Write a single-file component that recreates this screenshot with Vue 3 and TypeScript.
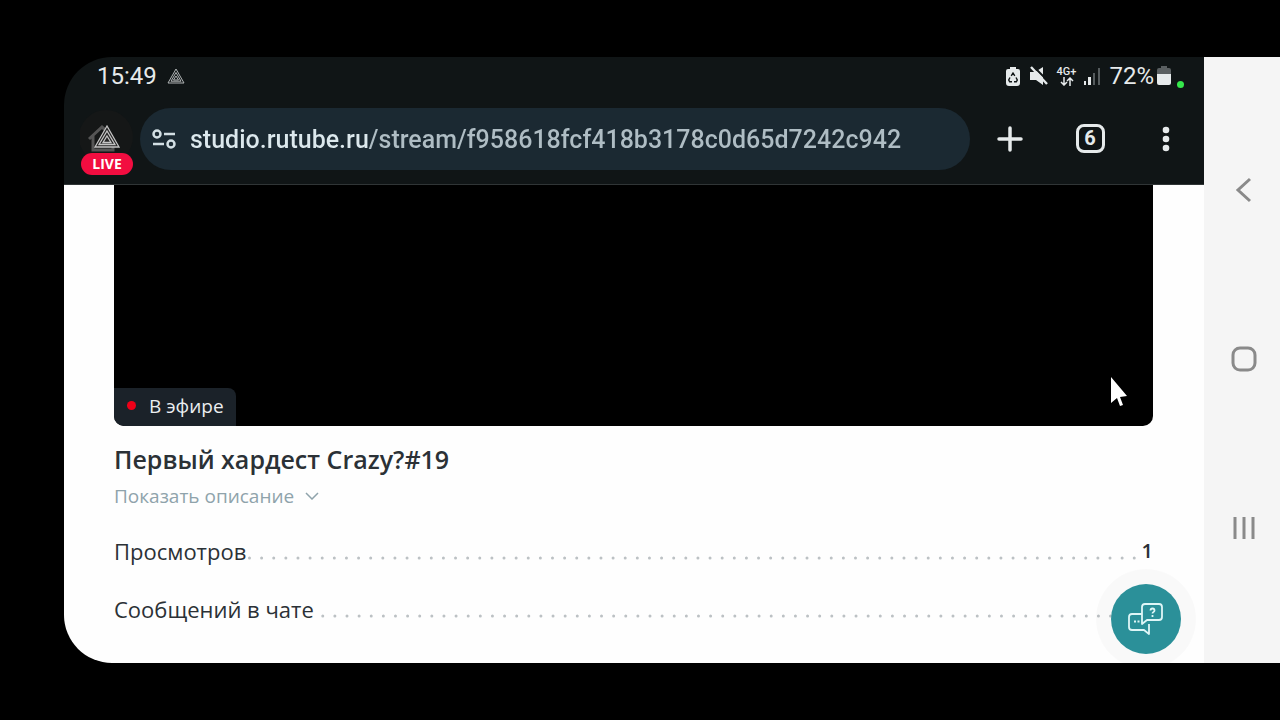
<script setup lang="ts">
import { ref } from 'vue'

interface Stat {
  label: string
  value: string
}

const address = ref('studio.rutube.ru/stream/f958618fcf418b3178c0d65d7242c942')
const tabCount = ref(6)
const expanded = ref(false)
const stats: Stat[] = [
  { label: 'Просмотров', value: '1' },
  { label: 'Сообщений в чате', value: '0' },
]
</script>

<template>
  <div class="stage">
    <div class="device">
      <div class="screen">
        <header class="chrome">
          <div class="status">
            <time class="clock">15:49</time>
            <svg class="app-mark" viewBox="0 0 18 16" width="18" height="16" aria-hidden="true">
              <path d="M9 1 17 15H1z M9 4.500 14 13.200H4z M9 8 11.500 12H6.500z" />
            </svg>
            <div class="indicators">
              <svg viewBox="0 0 14 20" width="14" height="20" aria-hidden="true">
                <path fill="#e6eaeb" d="M4 1h6v2h2q2 0 2 2v12q0 3-3 3H3q-3 0-3-3V5q0-2 2-2h2z" />
                <path fill="none" stroke="#101516" stroke-width="1.400" d="M5.200 9.800 7 7l1.800 2.800M10 11.500l1.300 2.500-1 1.800H8M6 15.800H3.700l-1-1.800 1.300-2.500" />
              </svg>
              <svg class="muted" viewBox="0 0 20 20" width="20" height="20" aria-hidden="true">
                <path fill="#e6eaeb" d="M1 6h5l8-5v18l-7-5H1z" />
                <path stroke="#101516" stroke-width="2" d="M4 0 20 16" />
                <path stroke="#e6eaeb" stroke-width="2.400" d="m2 1 16 17" />
              </svg>
              <span class="network">
                <span>4G+</span>
                <svg viewBox="0 0 14 9" width="14" height="9" fill="none" stroke="#e6eaeb" stroke-width="1.500" aria-hidden="true">
                  <path d="M4 0v8M1 5l3 3 3-3M10 9V1M7 4l3-3 3 3" />
                </svg>
              </span>
              <svg viewBox="0 0 18 18" width="18" height="18" aria-hidden="true">
                <path fill="#e6eaeb" d="M1 14h2v4H1zM5 10h3v8H5z" />
                <path fill="#555b5d" d="M10 6h2v12h-2zM15 1h2v17h-2z" />
              </svg>
              <span class="percent">72%</span>
              <svg viewBox="0 0 14 20" width="14" height="20" aria-hidden="true">
                <path fill="#5a5f61" d="M4 0h6v2h2q2 0 2 2v5H0V4q0-2 2-2h2z" />
                <path fill="#e6eaeb" d="M0 8h14v9q0 2-2 2H2q-2 0-2-2z" />
              </svg>
              <span class="privacy"></span>
            </div>
          </div>
          <form class="toolbar" @submit.prevent>
            <button class="home" type="button" aria-label="Home">
              <svg viewBox="0 0 54 66" width="54" height="66" aria-hidden="true">
                <circle cx="26" cy="31" r="27" fill="#151717" />
                <path fill="none" stroke="#555" stroke-width="3" d="M9 33 22 21l8 7M13 30v14h20V33" />
                <g fill="none" stroke="#c4c4c4" stroke-width="1.300">
                  <path fill="#262626" d="M27 20 39 41H15z" />
                  <path d="M27 25 35 38.500H19zM27 30l4 6.500h-8z" />
                </g>
              </svg>
              <span class="live">LIVE</span>
            </button>
            <label class="omnibox">
              <svg viewBox="0 0 24 20" width="24" height="20" fill="none" stroke="#d3dfe4" stroke-width="2.500" aria-hidden="true">
                <circle cx="5" cy="5" r="3.500" /><path d="M12 5h11M1 15h11" /><circle cx="19" cy="15" r="3.500" />
              </svg>
              <input v-model="address" class="url" type="text" aria-label="Address" spellcheck="false" />
            </label>
            <button class="tool" type="button" aria-label="New tab">
              <svg viewBox="0 0 26 26" width="26" height="26" aria-hidden="true">
                <path stroke="#e6eaeb" stroke-width="3.500" stroke-linecap="round" d="M13 2v22M2 13h22" />
              </svg>
            </button>
            <button class="tool" type="button" aria-label="Tabs"><span class="tabs">{{ tabCount }}</span></button>
            <button class="tool more" type="button" aria-label="Menu">
              <svg viewBox="0 0 8 26" width="8" height="26" fill="#e6eaeb" aria-hidden="true">
                <circle cx="4" cy="4" r="3.300" /><circle cx="4" cy="13" r="3.300" /><circle cx="4" cy="22" r="3.300" />
              </svg>
            </button>
          </form>
        </header>

        <main class="page">
          <section class="player">
            <span class="on-air">В эфире</span>
            <svg class="cursor" viewBox="0 0 18 30" width="18" height="30" aria-hidden="true">
              <path fill="#fff" d="M1 0v26l6-5 3 8 3-1-3-8 7-1z" />
            </svg>
          </section>
          <h1 class="title">Первый хардест Crazy?#19</h1>
          <button class="describe" type="button" :aria-expanded="expanded" @click="expanded = !expanded">
            Показать описание
            <svg viewBox="0 0 14 8" width="14" height="8" fill="none" stroke="#8fa3ab" stroke-width="1.500" aria-hidden="true">
              <path d="m1 1 6 6 6-6" />
            </svg>
          </button>
          <dl class="stats">
            <div v-for="stat in stats" :key="stat.label" class="stat">
              <dt>{{ stat.label }}</dt>
              <svg class="leader" height="4" aria-hidden="true">
                <g class="leader-flip"><line x1="7" y1="2" x2="2000" y2="2" /></g>
              </svg>
              <dd>{{ stat.value }}</dd>
            </div>
          </dl>
          <button class="support" type="button" aria-label="Чат поддержки">
            <svg viewBox="0 0 36 34" width="36" height="34" fill="none" stroke="#dff6f7" stroke-width="1.800" stroke-linejoin="round" aria-hidden="true">
              <path d="M14 12H4q-3 0-3 3v10q0 3 3 3h12l5 4V22" />
              <path d="M17 2h14q3 0 3 3v10q0 3-3 3H19l-5 4V5q0-3 3-3z" />
              <path d="M6 19.500h2M9.500 19.500h2" />
              <path d="M22.500 8.500q0-2 2-2t2 2q0 1-1 1.500t-1 1.500M24.500 13v2" />
            </svg>
          </button>
        </main>
      </div>

      <nav class="system">
        <button type="button" aria-label="Back">
          <svg viewBox="0 0 26 26" width="26" height="26"><path d="M19 2 7 13l12 11" /></svg>
        </button>
        <button type="button" aria-label="Home screen">
          <svg viewBox="0 0 26 26" width="26" height="26"><rect x="2" y="2" width="22" height="22" rx="7" /></svg>
        </button>
        <button type="button" aria-label="Recent apps">
          <svg viewBox="0 0 26 26" width="26" height="26"><path d="M4 2v22M13 2v22M22 2v22" /></svg>
        </button>
      </nav>
    </div>
  </div>
</template>

<style>
body {
  margin: 0;
  background: #000;
}
</style>

<style scoped>
.stage {
  box-sizing: border-box;
  display: flex;
  min-height: 100vh;
  padding: 57px 0 57px 64px;
  background: #000;
  font-family: "Open Sans", "Noto Sans", sans-serif;
}
button {
  padding: 0;
  border: 0;
  background: none;
  font: inherit;
  color: inherit;
}
.device {
  flex: 1;
  display: flex;
  border-radius: 48px 0 0 48px;
  overflow: hidden;
}
.screen {
  flex: 1;
  min-width: 0;
  display: flex;
  flex-direction: column;
}
.chrome {
  background: #101516;
  border-bottom: 1px solid #303536;
  color: #e6eaeb;
  font-family: Roboto, sans-serif;
}
.status {
  display: flex;
  align-items: center;
  height: 38px;
  padding: 0 20px 0 33px;
  font-size: 24px;
}
.app-mark {
  margin-left: 10px;
  fill: none;
  stroke: #b0b4b5;
}
.indicators {
  display: flex;
  align-items: center;
  margin-left: auto;
}
.muted {
  margin-left: 9px;
}
.network {
  display: flex;
  flex-direction: column;
  align-items: center;
  margin: 0 7px 0 8px;
  font-size: 11px;
  font-weight: 500;
  line-height: 10px;
}
.percent {
  margin: 0 3px 0 8px;
}
.privacy {
  width: 7px;
  height: 7px;
  margin: 16px 0 0 6px;
  border-radius: 50%;
  background: #35e84b;
}
.toolbar {
  display: flex;
  align-items: center;
  height: 87px;
  padding: 0 12px 2px 16px;
}
.home {
  position: relative;
  width: 54px;
  height: 66px;
  margin-right: 6px;
}
.live {
  position: absolute;
  bottom: -3px;
  left: 1px;
  width: 52px;
  border-radius: 11px;
  background: #f20d40;
  color: #fff;
  font: 700 14px/22px "Open Sans", sans-serif;
  text-align: center;
}
.omnibox {
  flex: 1;
  display: flex;
  align-items: center;
  gap: 14px;
  height: 62px;
  padding: 0 20px 0 12px;
  border-radius: 31px;
  background: #1b2932;
}
.url {
  flex: 1;
  min-width: 0;
  padding: 2px 0 0;
  border: 0;
  outline: 0;
  background: linear-gradient(to right, #dce8ed 179px, #afbdc4 179px);
  background-clip: text;
  color: transparent;
  font: 500 25px/36px Roboto, sans-serif;
}
.tool {
  display: flex;
  align-items: center;
  justify-content: center;
  width: 80px;
  height: 48px;
}
.more {
  width: 52px;
  margin-left: 10px;
}
.tabs {
  box-sizing: border-box;
  width: 29px;
  height: 29px;
  border: 3px solid #e6eaeb;
  border-radius: 8px;
  font-size: 20px;
  font-weight: 700;
  line-height: 23px;
}
.page {
  position: relative;
  flex: 1;
  display: flex;
  flex-direction: column;
  padding: 0 51px 38px 50px;
  background: #fefefe;
  color: #2b3136;
}
.player {
  position: relative;
  flex: 1;
  display: flex;
  align-items: flex-end;
  min-height: 200px;
  border-radius: 0 0 10px 10px;
  background: #000;
  overflow: hidden;
}
.on-air {
  display: flex;
  align-items: center;
  box-sizing: border-box;
  height: 38px;
  padding: 0 12px 3px 13px;
  border-radius: 0 8px 0 0;
  background: #1b2229;
  color: #eceef0;
  font-size: 19px;
}
.on-air::before {
  content: "";
  width: 9px;
  height: 9px;
  margin-right: 13px;
  border-radius: 50%;
  background: #ee0018;
}
.cursor {
  position: absolute;
  right: 25px;
  bottom: 19px;
}
.title {
  margin: 17px 0 9px;
  font-size: 25px;
  font-weight: 600;
  line-height: 32px;
}
.describe {
  display: flex;
  align-items: center;
  align-self: flex-start;
  gap: 11px;
  color: #8fa3ab;
  font-size: 19px;
  line-height: 24px;
}
.stats {
  display: grid;
  gap: 26px;
  margin: 27px 0 0;
  font-size: 22px;
  line-height: 32px;
}
.stat {
  display: flex;
}
.leader {
  flex: 1;
  min-width: 0;
  margin: 21px 0 0;
}
.leader-flip {
  transform: scaleX(-1);
  transform-origin: 50% 50%;
  transform-box: view-box;
}
.leader line {
  stroke: #bcc1c4;
  stroke-width: 3;
  stroke-linecap: round;
  stroke-dasharray: 0 12.12;
}
.stat dd {
  margin: 0;
  font-size: 20px;
  font-weight: 600;
}
.support {
  position: absolute;
  right: 23px;
  bottom: 9px;
  display: flex;
  align-items: center;
  justify-content: center;
  width: 70px;
  height: 70px;
  border-radius: 50%;
  background: #2b9099;
  box-shadow: 0 0 0 15px rgb(0 0 0 / 2%);
}
.system {
  display: flex;
  flex-direction: column;
  justify-content: space-around;
  align-items: center;
  box-sizing: border-box;
  width: 76px;
  padding: 48px 0 50px 3px;
  background: #f5f5f5;
}
.system button {
  display: flex;
}
.system svg {
  fill: none;
  stroke: #8a8a8a;
  stroke-width: 3;
}
</style>
